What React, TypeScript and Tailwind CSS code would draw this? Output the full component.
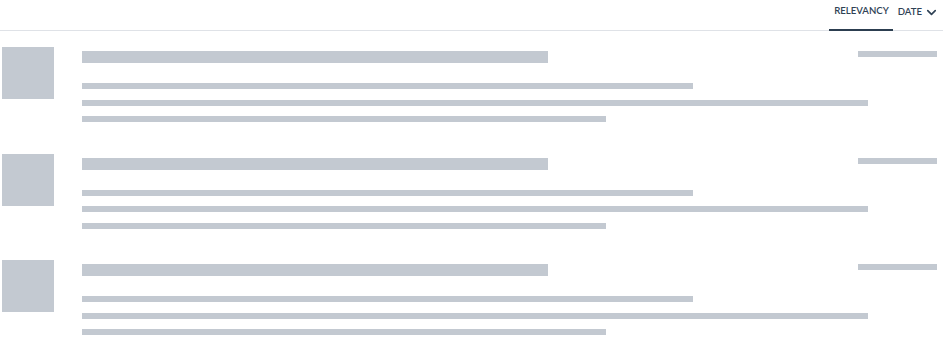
import { ChevronDown } from 'lucide-react'

const bar = 'bg-[#c3c9d1]'

function SkeletonItem() {
    return (
        <div className="flex items-start">
            {/* thumbnail */}
            <div className={`ml-[2px] w-[52px] h-[52px] shrink-0 ${bar}`} />

            <div className="ml-[28px] mt-[4px] flex-1 flex flex-col">
                {/* title + date */}
                <div className="flex items-start justify-between">
                    <div className={`w-[466px] h-[12px] ${bar}`} />
                    <div className={`w-[79px] h-[6px] ${bar}`} />
                </div>
                <div className="mt-[20px] flex flex-col gap-[10.5px]">
                    <div className={`w-[611px] h-[6px] ${bar}`} />
                    <div className={`w-[786px] h-[6px] ${bar}`} />
                    <div className={`w-[524px] h-[6px] ${bar}`} />
                </div>
            </div>
        </div>
    )
}

export default function App() {
    return (
        <div className="w-[943px] h-[348px] bg-white overflow-hidden font-['Lato','Liberation_Sans',sans-serif]">
            {/* sort tabs */}
            <div className="h-[31px] border-b border-[#dfe2e7] flex justify-end items-stretch pr-[4px] text-[9.6px] font-semibold text-[#2f4255]">
                <button className="pl-[5px] pr-[4px] pb-[6px] -mb-px border-b-2 border-[#2c3e50] flex items-center uppercase">
                    Relevancy
                </button>
                <button className="pl-[5px] pb-[6px] flex items-center gap-[2px] uppercase">
                    Date
                    <ChevronDown size={15} strokeWidth={2.6} />
                </button>
            </div>

            {/* loading placeholders */}
            <div className="pt-[16px] pr-[6px] flex flex-col gap-[31.5px]">
                <SkeletonItem />
                <SkeletonItem />
                <SkeletonItem />
            </div>
        </div>
    )
}
